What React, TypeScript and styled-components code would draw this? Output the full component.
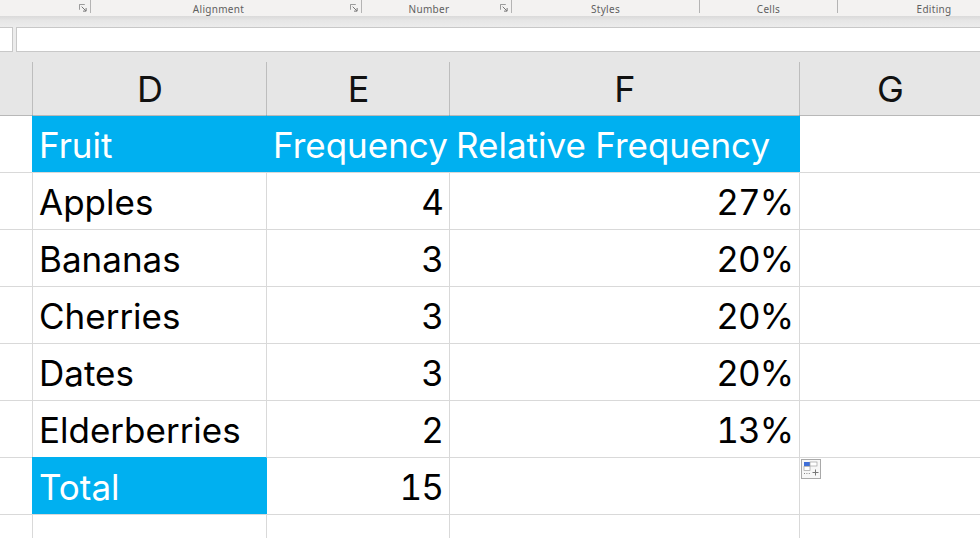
import styled, { createGlobalStyle } from 'styled-components';

const GlobalStyle = createGlobalStyle`
  html, body {
    margin: 0;
    padding: 0;
    width: 980px;
    height: 538px;
    overflow: hidden;
    background: #fff;
    font-family: 'Inter', 'Liberation Sans', sans-serif;
  }
`;

const COLUMNS = '32px 234px 183px 350px 181px';

const rows = [
  { fruit: 'Apples', count: '4', share: '27%' },
  { fruit: 'Bananas', count: '3', share: '20%' },
  { fruit: 'Cherries', count: '3', share: '20%' },
  { fruit: 'Dates', count: '3', share: '20%' },
  { fruit: 'Elderberries', count: '2', share: '13%' },
];

const Launcher = () => (
  <LauncherIcon viewBox="0 0 9 9">
    <path d="M0.5 6.5V0.5H6.5" fill="none" stroke="#8a8a8a" />
    <path d="M3 3L7.5 7.5M4.5 8H8V4.5" fill="none" stroke="#666" />
  </LauncherIcon>
);

const PasteOptions = () => (
  <svg width="20" height="20" viewBox="0 0 20 20">
    <rect x="0.5" y="0.5" width="19" height="19" fill="#f7f7f7" stroke="#a9a9a9" />
    <rect x="3" y="3" width="6" height="4" fill="#3f6fd8" />
    <rect x="9" y="3" width="7" height="4" fill="#fff" stroke="#a0a0a0" strokeWidth="0.7" />
    <rect x="3" y="7.5" width="6" height="4" fill="#fff" stroke="#a0a0a0" strokeWidth="0.7" />
    <path d="M3 14.5H10" stroke="#888" strokeDasharray="1 1.4" />
    <path d="M14.5 10.5V16.5M11.5 13.5H17.5" stroke="#777" />
  </svg>
);

export default function App() {
  return (
    <Page>
      <GlobalStyle />
      <Ribbon>
        <RibbonGroup $width={91}>
          <Launcher />
        </RibbonGroup>
        <RibbonGroup $width={271} $launcher>
          <GroupLabel>Alignment</GroupLabel>
          <Launcher />
        </RibbonGroup>
        <RibbonGroup $width={150} $launcher>
          <GroupLabel>Number</GroupLabel>
          <Launcher />
        </RibbonGroup>
        <RibbonGroup $width={188}>
          <GroupLabel>Styles</GroupLabel>
        </RibbonGroup>
        <RibbonGroup $width={138}>
          <GroupLabel>Cells</GroupLabel>
        </RibbonGroup>
        <LastGroup>
          <GroupLabel>Editing</GroupLabel>
        </LastGroup>
      </Ribbon>
      <RibbonShadow />
      <FormulaBar>
        <NameBox />
        <FormulaInput />
      </FormulaBar>
      <HeaderRow>
        <HeaderCell />
        <HeaderCell $divider>D</HeaderCell>
        <HeaderCell $divider>E</HeaderCell>
        <HeaderCell $divider>F</HeaderCell>
        <HeaderCell $divider>G</HeaderCell>
      </HeaderRow>
      <Sheet>
        <Row>
          <RowHead />
          <Cell $fill>Fruit</Cell>
          <Cell $fill>Frequency</Cell>
          <Cell $fill>Relative Frequency</Cell>
          <Cell $afterFill />
        </Row>
        {rows.map((row) => (
          <Row key={row.fruit}>
            <RowHead />
            <Cell>{row.fruit}</Cell>
            <Cell $right>{row.count}</Cell>
            <Cell $right>{row.share}</Cell>
            <Cell />
          </Row>
        ))}
        <Row>
          <RowHead />
          <Cell $fill>Total</Cell>
          <Cell $afterFill $right>15</Cell>
          <Cell />
          <Cell>
            <PasteButton>
              <PasteOptions />
            </PasteButton>
          </Cell>
        </Row>
        <Row>
          <RowHead />
          <Cell />
          <Cell />
          <Cell />
          <Cell />
        </Row>
      </Sheet>
    </Page>
  );
}

const Page = styled.div`
  width: 980px;
  height: 538px;
  overflow: hidden;
  display: flex;
  flex-direction: column;
`;

const Ribbon = styled.div`
  flex: none;
  height: 16px;
  display: flex;
  background: #f3f2f1;
`;

const RibbonGroup = styled.div<{ $width: number; $launcher?: boolean }>`
  position: relative;
  box-sizing: border-box;
  flex: none;
  width: ${(p) => p.$width}px;
  height: 13px;
  padding-right: ${(p) => (p.$launcher ? 15 : 0)}px;
  border-right: 1px solid #b4b4b4;
  display: flex;
  align-items: center;
  justify-content: center;
`;

const LastGroup = styled.div`
  flex: 1;
  height: 13px;
  padding-left: 50px;
  display: flex;
  align-items: center;
  justify-content: center;
`;

const GroupLabel = styled.span`
  position: relative;
  top: 2.5px;
  font-family: 'Noto Sans', sans-serif;
  font-size: 10px;
  line-height: 13px;
  letter-spacing: 0.3px;
  color: #5f5f5f;
`;

const LauncherIcon = styled.svg`
  position: absolute;
  right: 3px;
  top: 4px;
  width: 8px;
  height: 8px;
`;

const RibbonShadow = styled.div`
  flex: none;
  height: 11px;
  background: linear-gradient(#dadada, #e6e6e6 40%, #ececec);
`;

const FormulaBar = styled.div`
  flex: none;
  box-sizing: border-box;
  height: 25px;
  display: flex;
  gap: 3px;
  background: #ececec;
`;

const NameBox = styled.div`
  box-sizing: border-box;
  width: 13px;
  border: 1px solid #c8c8c8;
  border-left: 0;
  background: #fff;
`;

const FormulaInput = styled.div`
  flex: 1;
  box-sizing: border-box;
  border: 1px solid #c8c8c8;
  border-right: 0;
  background: #fff;
`;

const HeaderRow = styled.div`
  flex: none;
  display: grid;
  grid-template-columns: ${COLUMNS};
  height: 63px;
  padding-top: 10px;
  box-sizing: border-box;
  background: #e6e6e6;
`;

const HeaderCell = styled.div<{ $divider?: boolean }>`
  box-sizing: border-box;
  padding-left: 1px;
  border-left: ${(p) => (p.$divider ? '1px solid #bdbdbd' : '0')};
  display: flex;
  align-items: center;
  justify-content: center;
  font-size: 36px;
  line-height: 52px;
  color: #111;
`;

const Sheet = styled.div`
  flex: none;
  display: flex;
  flex-direction: column;
`;

const Row = styled.div`
  display: grid;
  grid-template-columns: ${COLUMNS};
  height: 57px;
  flex: none;

  &:first-child > div {
    border-top-color: #b8b8b8;
  }
`;

const RowHead = styled.div`
  box-sizing: border-box;
  background: #fff;
  border-top: 1px solid #d9d9d9;
`;

const Cell = styled.div<{ $fill?: boolean; $right?: boolean; $afterFill?: boolean }>`
  position: relative;
  box-sizing: border-box;
  padding: 2px ${(p) => (p.$right ? 6 : 5)}px 0 6px;
  display: flex;
  align-items: center;
  justify-content: ${(p) => (p.$right ? 'flex-end' : 'flex-start')};
  font-size: 35px;
  font-variant-numeric: tabular-nums;
  letter-spacing: ${(p) => (p.$right ? '-1px' : '0')};
  white-space: nowrap;
  color: ${(p) => (p.$fill ? '#fff' : '#000')};
  background: ${(p) => (p.$fill ? '#00b0f0' : '#fff')};
  border-top: 1px solid ${(p) => (p.$fill ? '#00b0f0' : '#d9d9d9')};
  border-left: 1px solid ${(p) => (p.$fill || p.$afterFill ? '#00b0f0' : '#d9d9d9')};
`;

const PasteButton = styled.div`
  position: absolute;
  left: 1px;
  top: 1px;
  line-height: 0;
`;
